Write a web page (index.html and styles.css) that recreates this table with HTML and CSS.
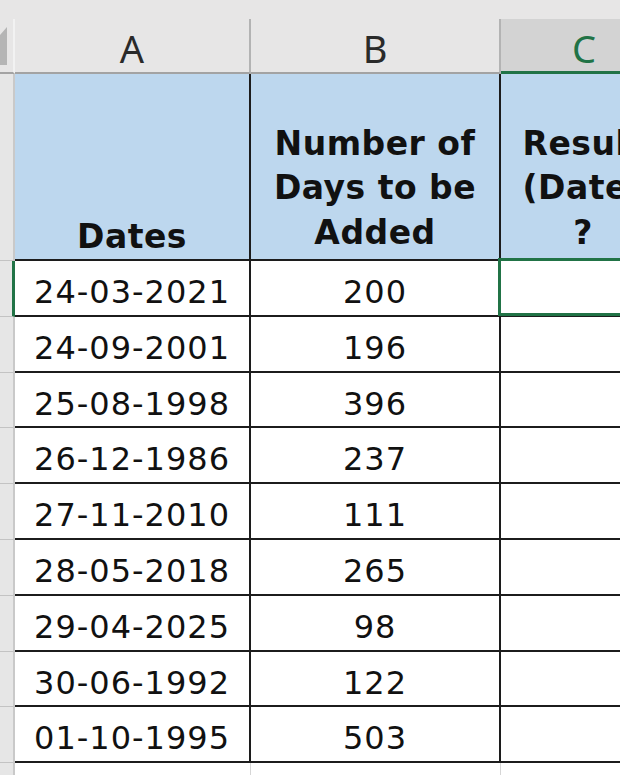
FILE: index.html
```html
<!DOCTYPE html>
<html>
<head>
<meta charset="utf-8">
<link rel="stylesheet" href="styles.css">
</head>
<body>
<div class="sheet">
  <div class="topband"></div>
  <div class="colheads">
    <div class="corner">
      <svg class="corner-tri" width="13" height="53" viewBox="0 0 13 53"><polygon points="0,16 7,8 7,46 0,46" fill="#b5b5b5"/></svg>
    </div>
    <div class="colhead">A</div>
    <div class="colhead">B</div>
    <div class="colhead active">C</div>
  </div>
  <div class="grid">
    <div class="rh"></div>
    <div class="cell hdr hdr-single"><span>Dates</span></div>
    <div class="cell hdr"><span>Number of</span><span>Days to be</span><span>Added</span></div>
    <div class="cell hdr"><span>Result</span><span>(Date)</span><span>?</span></div>

    <div class="rh sel-row"></div>
    <div class="cell">24-03-2021</div>
    <div class="cell">200</div>
    <div class="cell selected"><div class="selbox"></div></div>

    <div class="rh"></div>
    <div class="cell">24-09-2001</div>
    <div class="cell">196</div>
    <div class="cell"></div>

    <div class="rh"></div>
    <div class="cell">25-08-1998</div>
    <div class="cell">396</div>
    <div class="cell"></div>

    <div class="rh"></div>
    <div class="cell">26-12-1986</div>
    <div class="cell">237</div>
    <div class="cell"></div>

    <div class="rh"></div>
    <div class="cell">27-11-2010</div>
    <div class="cell">111</div>
    <div class="cell"></div>

    <div class="rh"></div>
    <div class="cell">28-05-2018</div>
    <div class="cell">265</div>
    <div class="cell"></div>

    <div class="rh"></div>
    <div class="cell">29-04-2025</div>
    <div class="cell">98</div>
    <div class="cell"></div>

    <div class="rh"></div>
    <div class="cell">30-06-1992</div>
    <div class="cell">122</div>
    <div class="cell"></div>

    <div class="rh"></div>
    <div class="cell">01-10-1995</div>
    <div class="cell">503</div>
    <div class="cell"></div>

    <div class="rh"></div>
    <div class="cell blank"></div>
    <div class="cell blank"></div>
    <div class="cell blank"></div>
  </div>
</div>
</body>
</html>
```
FILE: styles.css
```css
html, body {
  margin: 0;
  padding: 0;
  background: #ffffff;
  overflow: hidden;
}

.sheet {
  width: 667px;
}

.topband {
  height: 19px;
  background: #e7e6e6;
}

.colheads {
  display: grid;
  grid-template-columns: 15px 236px 250px 166px;
  height: 55px;
  background: #e7e6e6;
}

.corner {
  box-sizing: border-box;
  border-right: 2px solid #f2f2f2;
  border-bottom: 2px solid #a3a3a3;
}

.corner-tri {
  display: block;
}

.colhead {
  box-sizing: border-box;
  height: 55px;
  padding-top: 5px;
  line-height: 48px;
  text-align: center;
  font-family: "Noto Sans", "Open Sans", sans-serif;
  font-size: 38px;
  color: #2a2a2a;
  border-right: 2px solid #b3b3b3;
  border-bottom: 2px solid #a3a3a3;
}

.colhead.active {
  background: #d3d3d3;
  color: #217346;
  border-right: none;
  border-bottom: 3px solid #217346;
  padding-top: 5px;
}

.grid {
  display: grid;
  grid-template-columns: 15px 236px 250px 166px;
  grid-template-rows: 187px repeat(10, 55.8px);
}

.rh {
  box-sizing: border-box;
  background: #e6e6e6;
  border-right: 2px solid #c9c9c9;
  border-bottom: 1px solid #c3c3c3;
}

.rh.sel-row {
  border-right: 3px solid #217346;
}

.cell {
  box-sizing: border-box;
  border-right: 2px solid #1c1c1c;
  border-bottom: 2px solid #1c1c1c;
  background: #ffffff;
  text-align: center;
  font-family: "DejaVu Sans", Verdana, sans-serif;
  font-size: 32px;
  letter-spacing: 1px;
  color: #111111;
  padding-top: 11px;
  line-height: 40px;
  white-space: nowrap;
}

.cell.hdr {
  background: #bdd7ee;
  display: flex;
  flex-direction: column;
  justify-content: flex-end;
  align-items: center;
  padding-top: 0;
  padding-bottom: 4px;
  font-weight: bold;
  font-size: 33px;
  letter-spacing: 0.5px;
  line-height: 44.5px;
}

.cell.hdr-single {
  padding-bottom: 0;
}

.cell.selected {
  position: relative;
}

.selbox {
  position: absolute;
  left: -3px;
  top: -3px;
  right: -3px;
  bottom: -1px;
  border: 3px solid #217346;
}

.cell.blank {
  border-right: 1px solid #d6d6d6;
  border-bottom: 1px solid #d6d6d6;
}
```
